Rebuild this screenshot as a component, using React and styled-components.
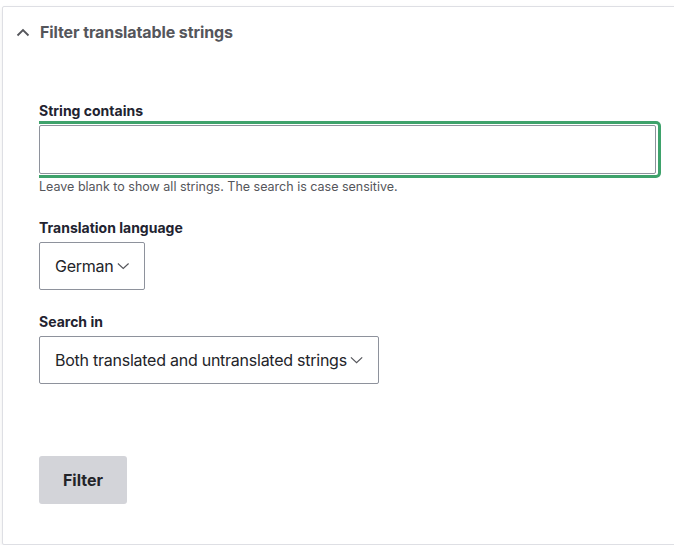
import React, { useState } from 'react';
import styled, { createGlobalStyle } from 'styled-components';

const GlobalStyle = createGlobalStyle`
  html, body {
    margin: 0;
    padding: 0;
    background: #ffffff;
    overflow: hidden;
  }
  body {
    padding: 6px 0 0 2px;
    font-family: Inter, "Noto Sans", "Liberation Sans", sans-serif;
    color: #232429;
  }
`;

const Details = styled.div`
  width: 700px;
  height: 539px;
  box-sizing: border-box;
  border: 1px solid #dedfe4;
  border-radius: 2px;
  background: #fff;
  box-shadow: 0 2px 4px rgba(0, 0, 0, 0.08);
`;

const Summary = styled.div`
  display: flex;
  align-items: center;
  height: 50px;
  padding-left: 13px;
  gap: 10px;
  color: #55565b;
  font-size: 16px;
  font-weight: 700;
  letter-spacing: -0.1px;
  cursor: pointer;
`;

const Content = styled.div`
  padding: 45px 0 40px 36px;
`;

const FormItem = styled.div`
  margin-bottom: ${(p) => p.gap}px;
`;

const Label = styled.label`
  display: block;
  font-size: 14px;
  line-height: 18px;
  font-weight: 700;
  color: #222330;
  margin-bottom: 5px;
`;

const FocusRing = styled.div`
  width: 618px;
  margin: -4px 0 -4px 0;
  border: 3px solid #3ea26b;
  border-left: none;
  border-radius: 0 5px 5px 0;
  padding: 1px 1px 1px 0;
`;

const TextInput = styled.input`
  display: block;
  width: 617px;
  height: 49px;
  box-sizing: border-box;
  border: 1px solid #8e929c;
  border-radius: 2px;
  font: inherit;
  font-size: 16px;
  padding: 0 15px;
  outline: none;
`;

const Description = styled.div`
  margin-top: 4px;
  font-size: 12.5px;
  line-height: 17px;
  color: #55565b;
`;

const SelectBox = styled.div`
  display: inline-flex;
  align-items: center;
  height: 48px;
  box-sizing: border-box;
  border: 1px solid #8e929c;
  border-radius: 2px;
  padding: 0 15px;
  gap: 3px;
  font-size: 16px;
  letter-spacing: -0.25px;
  white-space: nowrap;
  color: #232429;
  width: ${(p) => p.width}px;
`;

const Button = styled.button`
  width: 88px;
  height: 48px;
  border: none;
  border-radius: 3px;
  background: #d3d4d9;
  color: #232429;
  font: inherit;
  font-size: 16px;
  font-weight: 700;
  cursor: pointer;
`;

const ChevronUp = () => (
  <svg width="14" height="9" viewBox="0 0 14 9" fill="none">
    <path d="M1.5 7.5 L7 2 L12.5 7.5" stroke="#55565b" strokeWidth="1.8" />
  </svg>
);

const ChevronDown = () => (
  <svg width="14" height="8" viewBox="0 0 14 8" fill="none">
    <path d="M1 1.2 L7 6.8 L13 1.2" stroke="#55565b" strokeWidth="1.3" />
  </svg>
);

export default function App() {
  const [query, setQuery] = useState('');

  return (
    <>
      <GlobalStyle />
      <Details>
        <Summary>
          <ChevronUp />
          Filter translatable strings
        </Summary>
        <Content>
          <FormItem gap={24}>
            <Label htmlFor="string">String contains</Label>
            <FocusRing>
              <TextInput id="string" value={query} onChange={(e) => setQuery(e.target.value)} />
            </FocusRing>
            <Description>Leave blank to show all strings. The search is case sensitive.</Description>
          </FormItem>
          <FormItem gap={23}>
            <Label>Translation language</Label>
            <SelectBox width={106}>
              German
              <ChevronDown />
            </SelectBox>
          </FormItem>
          <FormItem gap={72}>
            <Label>Search in</Label>
            <SelectBox width={340}>
              Both translated and untranslated strings
              <ChevronDown />
            </SelectBox>
          </FormItem>
          <Button>Filter</Button>
        </Content>
      </Details>
    </>
  );
}
